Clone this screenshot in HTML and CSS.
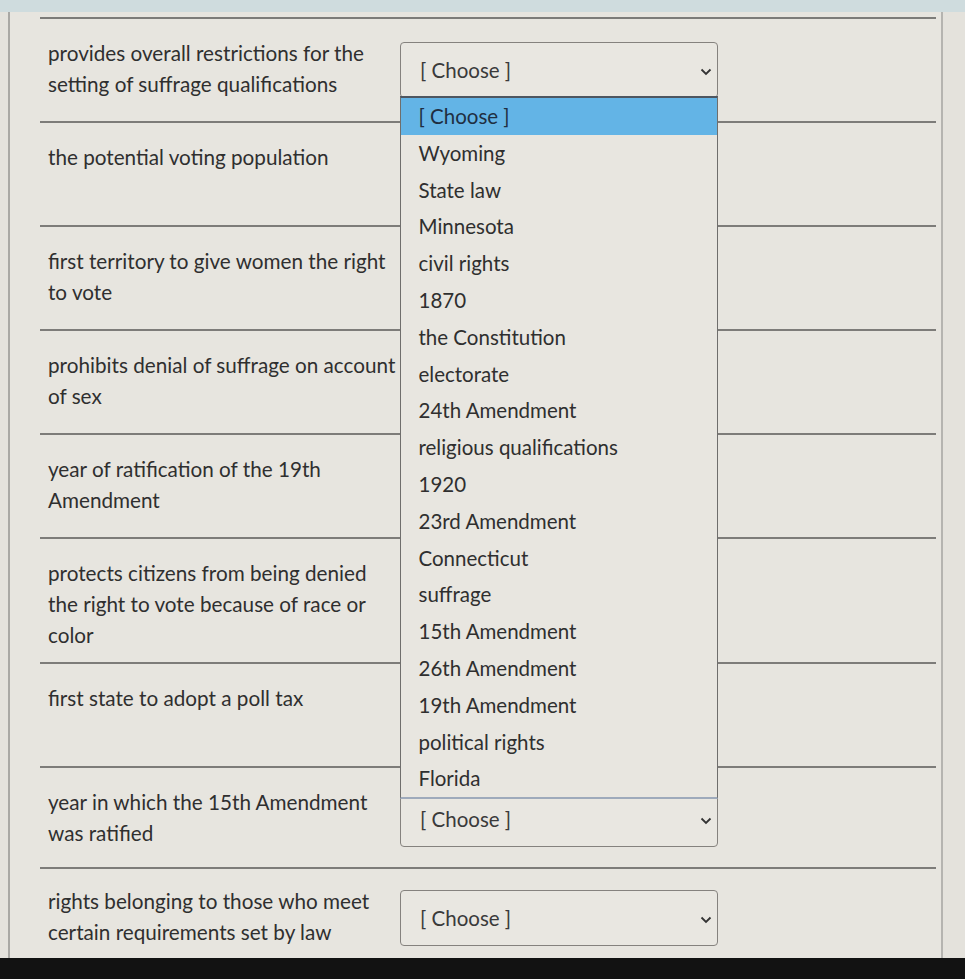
FILE: index.html
```html
<!DOCTYPE html>
<html lang="en">
<head>
<meta charset="utf-8">
<title>Matching</title>
<link rel="stylesheet" href="styles.css">
</head>
<body>
<div class="topbar"></div>
<div class="frame">
  <div class="quiz">
    <div class="row">
      <div class="prompt">provides overall restrictions for the setting of suffrage qualifications</div>
      <div class="select open">
        <span class="value">[ Choose ]</span>
        <svg class="chev" viewBox="0 0 12 8" width="12" height="8"><path d="M1.5 1.5 L6 6 L10.5 1.5" fill="none" stroke="#333" stroke-width="1.8"/></svg>
        <ul class="menu">
          <li class="active">[ Choose ]</li>
          <li>Wyoming</li>
          <li>State law</li>
          <li>Minnesota</li>
          <li>civil rights</li>
          <li>1870</li>
          <li>the Constitution</li>
          <li>electorate</li>
          <li>24th Amendment</li>
          <li>religious qualifications</li>
          <li>1920</li>
          <li>23rd Amendment</li>
          <li>Connecticut</li>
          <li>suffrage</li>
          <li>15th Amendment</li>
          <li>26th Amendment</li>
          <li>19th Amendment</li>
          <li>political rights</li>
          <li>Florida</li>
        </ul>
      </div>
    </div>
    <div class="row">
      <div class="prompt">the potential voting population</div>
      <div class="select covered"><span class="value">[ Choose ]</span></div>
    </div>
    <div class="row">
      <div class="prompt">first territory to give women the right to vote</div>
      <div class="select covered"><span class="value">[ Choose ]</span></div>
    </div>
    <div class="row">
      <div class="prompt">prohibits denial of suffrage on account of sex</div>
      <div class="select covered"><span class="value">[ Choose ]</span></div>
    </div>
    <div class="row">
      <div class="prompt">year of ratification of the 19th Amendment</div>
      <div class="select covered"><span class="value">[ Choose ]</span></div>
    </div>
    <div class="row">
      <div class="prompt">protects citizens from being denied the right to vote because of race or color</div>
      <div class="select covered"><span class="value">[ Choose ]</span></div>
    </div>
    <div class="row">
      <div class="prompt">first state to adopt a poll tax</div>
      <div class="select covered"><span class="value">[ Choose ]</span></div>
    </div>
    <div class="row short">
      <div class="prompt">year in which the 15th Amendment was ratified</div>
      <div class="select">
        <span class="value">[ Choose ]</span>
        <svg class="chev" viewBox="0 0 12 8" width="12" height="8"><path d="M1.5 1.5 L6 6 L10.5 1.5" fill="none" stroke="#333" stroke-width="1.8"/></svg>
      </div>
    </div>
    <div class="row last">
      <div class="prompt">rights belonging to those who meet certain requirements set by law</div>
      <div class="select">
        <span class="value">[ Choose ]</span>
        <svg class="chev" viewBox="0 0 12 8" width="12" height="8"><path d="M1.5 1.5 L6 6 L10.5 1.5" fill="none" stroke="#333" stroke-width="1.8"/></svg>
      </div>
    </div>
  </div>
</div>
<div class="bottombar"></div>
</body>
</html>
```

FILE: styles.css
```css
* { box-sizing: border-box; }
html, body { margin: 0; padding: 0; }
body {
  width: 965px;
  height: 979px;
  overflow: hidden;
  background: #e4e2dc;
  font-family: Lato, "Open Sans", sans-serif;
  color: #2f2f2f;
  display: flex;
  flex-direction: column;
}
.topbar {
  height: 12px;
  background: #cfdcde;
  flex: none;
}
.frame {
  flex: 1;
  margin: 0 22px 0 8px;
  border-left: 2px solid #a9a8a4;
  border-right: 2px solid #b5b4b0;
  background: #e7e5df;
  padding: 5px 5px 0 30px;
  overflow: hidden;
}
.quiz {
  border-top: 2px solid #7d7c79;
}
.row {
  display: flex;
  align-items: flex-start;
  padding: 19px 0 11px 8px;
  border-bottom: 2px solid #7d7c79;
}
.row.short { padding-bottom: 8px; }
.row.last { border-bottom: none; padding-top: 17px; }
.prompt {
  width: 352px;
  flex: none;
  font-size: 20.7px;
  line-height: 31px;
  padding-right: 2px;
}
.select {
  position: relative;
  width: 318px;
  height: 56px;
  margin: 4px 0 12px 0;
  border: 1.5px solid #85827e;
  border-radius: 4px;
  background: #e9e7e1;
  display: flex;
  align-items: center;
  padding-left: 19px;
}
.select .value {
  font-size: 20.5px;
  color: #3a3a3a;
}
.select.covered .value {
  visibility: hidden;
}
.chev {
  position: absolute;
  right: 5px;
  top: 25px;
}
.select.open {
  z-index: 2;
}
.menu {
  position: absolute;
  top: 53px;
  left: -1.5px;
  width: 318px;
  margin: 0;
  padding: 0;
  list-style: none;
  background: #e8e6e0;
  border: 1.5px solid #6f6e6c;
  border-top: 2px solid #4e5660;
  border-bottom: 2px solid #9eaabb;
}
.menu li {
  height: 36.8px;
  line-height: 36px;
  padding-left: 18px;
  font-size: 20.5px;
  color: #2f2f2f;
}
.menu li.active {
  background: #63b4e6;
  color: #1f2f42;
}
.bottombar {
  height: 21px;
  background: #121212;
  flex: none;
}
```
